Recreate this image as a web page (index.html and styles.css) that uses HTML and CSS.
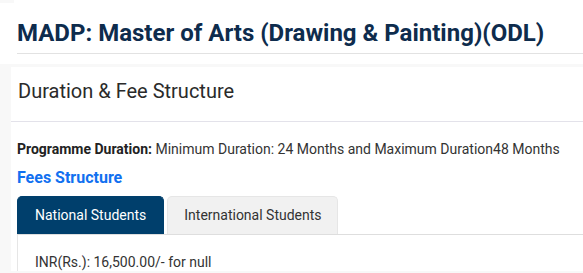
FILE: index.html
```html
<!DOCTYPE html>
<html>
<head>
<meta charset="utf-8">
<link rel="stylesheet" href="styles.css">
</head>
<body>
<div class="page-head">
  <h1 class="title">MADP: Master of Arts (Drawing &amp; Painting)(ODL)</h1>
</div>
<div class="card">
  <div class="card-head">Duration &amp; Fee Structure</div>
  <div class="card-body">
    <p class="duration"><b>Programme Duration:</b> Minimum Duration: 24 Months and Maximum Duration48 Months</p>
    <h3 class="fees">Fees Structure</h3>
    <div class="tabs">
      <div class="tab active">National Students</div>
      <div class="tab intl">International Students</div>
    </div>
    <div class="tab-pane">INR(Rs.): 16,500.00/- for null</div>
  </div>
</div>
</body>
</html>
```
FILE: styles.css
```css
html, body { margin: 0; padding: 0; }
body {
  background: #f8f8f8;
  font-family: Roboto, "Liberation Sans", Arial, sans-serif;
  color: #333;
  width: 583px;
  height: 273px;
  overflow: hidden;
}
.page-head {
  background: linear-gradient(#f8f8f8, #f8f8f8) 0 0 / 14px 3px no-repeat, #fff;
  padding: 3px 0 10px 17px;
}
.title {
  margin: 0;
  padding: 17px 0 6px 0;
  font-size: 24px;
  font-weight: 700;
  line-height: 27px;
  color: #0e2c4d;
  border-bottom: 1px solid #e2e2e2;
}
.card {
  background: #fff;
  margin: 3px 0 0 11px;
}
.card-head {
  font-size: 20px;
  line-height: 24px;
  padding: 12px 0 18px 7px;
  border-bottom: 1px solid #e3e2ea;
  color: #2a2a2a;
}
.card-body {
  padding: 19px 0 0 6px;
}
.duration {
  margin: 0;
  font-size: 14px;
  line-height: 16px;
  color: #333;
}
.duration b { color: #222; }
.fees {
  margin: 11px 0 0 0;
  font-size: 16px;
  line-height: 20px;
  font-weight: 700;
  color: #1170f0;
}
.tabs {
  display: flex;
  gap: 3px;
  margin-top: 8px;
  border-bottom: 1px solid #dedede;
}
.tab {
  font-size: 14px;
  line-height: 16px;
  padding: 10px 17px 11px 17px;
  border: 1px solid #e6e6e6;
  border-bottom: none;
  border-radius: 5px 5px 0 0;
  background: #f1f1f1;
  color: #333;
}
.tab.intl {
  padding-left: 16px;
  padding-right: 15px;
}
.tab.active {
  background: #003f6c;
  border-color: #003f6c;
  color: #fff;
}
.tab-pane {
  border-left: 1px solid #e6e6e6;
  padding: 18px 17px 0 17px;
  font-size: 14px;
  line-height: 18px;
  color: #333;
}
```
